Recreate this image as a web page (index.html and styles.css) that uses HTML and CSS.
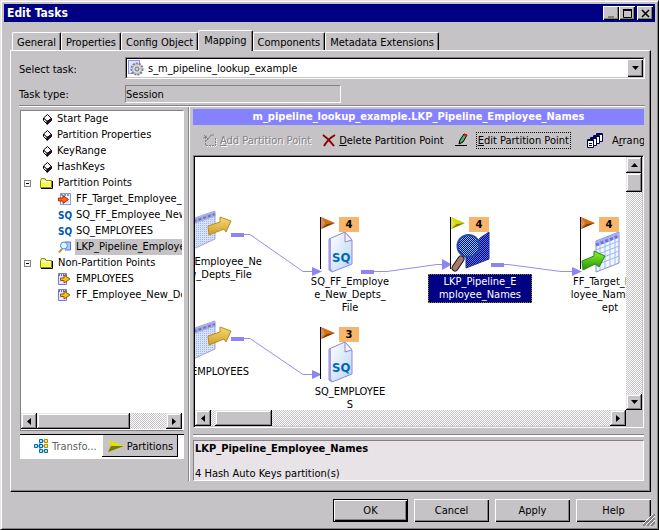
FILE: index.html
```html
<!DOCTYPE html>
<html lang="en">
<head>
  <meta charset="UTF-8">
  <title>Edit Tasks</title>
  <link rel="stylesheet" href="styles.css">
</head>
<body>

<!-- shared icons -->
<svg class="sprites" aria-hidden="true">
  <defs>
    <pattern id="dither" width="2" height="2" patternUnits="userSpaceOnUse">
      <rect width="1" height="1" fill="#000080"/>
      <rect x="1" y="1" width="1" height="1" fill="#000080"/>
    </pattern>
    <pattern id="mesh" width="2" height="2" patternUnits="userSpaceOnUse">
      <rect width="2" height="2" fill="#d6e3f7"/>
      <rect width="1" height="1" fill="#a5b3df"/>
    </pattern>
    <linearGradient id="paper" x1="0" y1="0" x2="1" y2="1">
      <stop offset="0" stop-color="#ffffff"/>
      <stop offset="1" stop-color="#b8d6f7"/>
    </linearGradient>
    <linearGradient id="gold" x1="0" y1="0" x2="0" y2="1">
      <stop offset="0" stop-color="#f7db6b"/>
      <stop offset="1" stop-color="#cf9d31"/>
    </linearGradient>
    <linearGradient id="green" x1="0" y1="0" x2="0" y2="1">
      <stop offset="0" stop-color="#94f031"/>
      <stop offset="1" stop-color="#21940a"/>
    </linearGradient>
  </defs>

  <symbol id="diamond" viewBox="0 0 9 11">
    <path d="M4.5 .5L8.5 4.5L4 7.5L.5 4Z" fill="#fff" stroke="#000"/>
    <path d="M.5 4V6.500L4 10V7.500Z" fill="#fff" stroke="#000"/>
    <path d="M4 7.500L8.500 4.500V6.500L4 10.500Z" fill="#3a1042" stroke="#000"/>
  </symbol>
  <symbol id="folder" viewBox="0 0 13 11">
    <path d="M.5 9.500V2.500L1.500 .5H5L6 2.500H11.500V9.500Z" fill="#f7f75a" stroke="#8c8c18"/>
    <path d="M1 10.500H12.500V3" fill="none" stroke="#000"/>
    <path d="M1.500 3.500H10" stroke="#fff"/>
  </symbol>
  <symbol id="target" viewBox="0 0 13 12">
    <rect x="2.500" y=".5" width="10" height="11" fill="#f7f7ff" stroke="#849ae7"/>
    <path d="M3 2H12" stroke="#8494de" stroke-width="2" stroke-dasharray="2 1"/>
    <path d="M5.500 9H11M8 7H11" stroke="#bdc7ef"/>
    <path d="M.5 5H5V2.500L10.500 6.500L5 10.500V8H.5Z" fill="#ff6b10" stroke="#b52800"/>
  </symbol>
  <symbol id="source" viewBox="0 0 13 12">
    <path d="M.5 .5H8.500V11.500H.5Z" fill="#e7e7ff" stroke="#737bd6"/>
    <path d="M1 2H9" stroke="#636bce" stroke-width="2" stroke-dasharray="1 1"/>
    <path d="M2.500 5H6V2L12 6L6 10V7.500H2.500Z" fill="#ffbd18" stroke="#8c5a00"/>
  </symbol>
  <symbol id="lens" viewBox="0 0 13 12">
    <path d="M7 1H12.500V9H7" fill="#b5c7f7" stroke="#5a73ce"/>
    <path d="M4 8L1 11.500" stroke="#bd9a10" stroke-width="2"/>
    <circle cx="6" cy="4.500" r="3.500" fill="#d6f7ff" stroke="#4a8cd6"/>
  </symbol>
  <symbol id="gear" viewBox="0 0 16 16">
    <rect x=".5" y=".5" width="11" height="13" fill="#dee3ff" stroke="#8494e7"/>
    <circle cx="9" cy="9" r="5.500" fill="#dedede" stroke="#7b7b84" stroke-width="2" stroke-dasharray="2 1"/>
    <circle cx="9" cy="9" r="4.500" fill="#dedede" stroke="#b5b5bd"/>
    <circle cx="9" cy="9" r="2" fill="#b5d7ff" stroke="#73737b"/>
  </symbol>
  <symbol id="left" viewBox="0 0 4 7"><path d="M4 0V7L0 3.500Z"/></symbol>
  <symbol id="right" viewBox="0 0 4 7"><path d="M0 0V7L4 3.500Z"/></symbol>
  <symbol id="up" viewBox="0 0 7 4"><path d="M0 4H7L3.500 0Z"/></symbol>
  <symbol id="down" viewBox="0 0 7 4"><path d="M0 0H7L3.500 4Z"/></symbol>

  <!-- node artwork, 104 x 57 -->
  <symbol id="flag" viewBox="0 0 104 57">
    <path d="M22.500 0V52" stroke="#000"/>
    <path d="M23 0L37 6L23 12Z" fill="currentColor"/>
    <path d="M23 12L37 6L29 7Z" fill="#000" opacity=".45"/>
    <path d="M23 0L27 6L23 12Z" fill="#fff" opacity=".25"/>
  </symbol>
  <symbol id="sqdoc" viewBox="0 0 104 57">
    <path d="M31 22L47 15L54 23V47L34 55L31 53Z" fill="url(#paper)" stroke="#8c86de"/>
    <path d="M32 22V53L34 54" fill="none" stroke="#a59ee7" stroke-width="2"/>
    <path d="M47 15V25L54 23Z" fill="#eff3ff" stroke="#8c86de"/>
  </symbol>
  <symbol id="srcbig" viewBox="0 0 104 57">
    <path d="M21 23L47 14V42L21 54Z" fill="url(#mesh)" stroke="#9ca6de"/>
    <path d="M21 26L47 17" stroke="#a5aae7" stroke-width="5"/>
    <path d="M21 26L47 17" stroke="#6b73bd" stroke-width="2" stroke-dasharray="3 2"/>
    <path d="M40 29L52 25V20L63 24L58 35L56 32L41 38Z" fill="url(#gold)" stroke="#b58a31"/>
  </symbol>
  <symbol id="lkpbig" viewBox="0 0 104 57">
    <path d="M38 35L52 21L61 15V42L38 51Z" fill="#5a75de"/>
    <path d="M38 35L52 21L61 15V42L38 51Z" fill="url(#dither)" stroke="#2135a5"/>
    <path d="M33 42L27 51" stroke="#211818" stroke-width="7" stroke-linecap="round"/>
    <path d="M33 42L27 51" stroke="#a57b6b" stroke-width="5" stroke-linecap="round" stroke-dasharray="1 1"/>
    <circle cx="40.500" cy="29" r="11" fill="#84c7f7"/>
    <circle cx="40.500" cy="29" r="11" fill="url(#dither)" stroke="#2149a5" stroke-width="2"/>
  </symbol>
  <symbol id="tgtbig" viewBox="0 0 104 57">
    <path d="M38 24L61 15V46L38 55Z" fill="#eff7ff" stroke="#848edb"/>
    <path d="M38 27L61 18" stroke="#a5aef7" stroke-width="5"/>
    <path d="M38 28L61 19" stroke="#6b75d6" stroke-width="3" stroke-dasharray="3 2"/>
    <path d="M38 33L61 24M38 38L61 29M38 43L61 34M38 48L61 39M42 28V53M47 26V51M52 24V49M57 22V48" stroke="#a5b6ef"/>
    <path d="M24 44L36 39V34L47 39L41 50L37 47L25 53Z" fill="url(#green)" stroke="#218c10"/>
  </symbol>
</svg>

<div class="window">
  <header class="titlebar">
    <h1>Edit Tasks</h1>
    <button class="winbtn" aria-label="Minimize" disabled><svg width="9" height="9"><path d="M1 8H7" stroke="#848284" stroke-width="2"/></svg></button>
    <button class="winbtn" aria-label="Maximize"><svg width="9" height="9"><path d="M.5 1V8.500H8.500V1" fill="none" stroke="#000"/><path d="M0 1H9" stroke="#000" stroke-width="2"/></svg></button>
    <button class="winbtn close" aria-label="Close"><svg width="9" height="9"><path d="M1 1L8 8M8 1L1 8" stroke="#000" stroke-width="1.500"/></svg></button>
  </header>

  <nav class="tabs">
    <button>General</button>
    <button>Properties</button>
    <button>Config Object</button>
    <button class="active">Mapping</button>
    <button>Components</button>
    <button>Metadata Extensions</button>
  </nav>

  <main class="page">
    <div class="field">
      <label for="task">Select task:</label>
      <div class="combo">
        <select id="task"><option>s_m_pipeline_lookup_example</option></select>
        <svg class="combo-icon" width="16" height="16"><use href="#gear"/></svg>
        <span class="combo-arrow"><svg width="7" height="4"><use href="#down"/></svg></span>
      </div>
    </div>
    <div class="field type">
      <label for="type">Task type:</label>
      <input id="type" type="text" value="Session" readonly>
    </div>

    <div class="split">
      <section class="side">
        <div class="tree">
          <ul>
            <li class="leaf"><svg width="9" height="11"><use href="#diamond"/></svg><span>Start Page</span></li>
            <li class="leaf"><svg width="9" height="11"><use href="#diamond"/></svg><span>Partition Properties</span></li>
            <li class="leaf"><svg width="9" height="11"><use href="#diamond"/></svg><span>KeyRange</span></li>
            <li class="leaf"><svg width="9" height="11"><use href="#diamond"/></svg><span>HashKeys</span></li>
            <li><i class="toggle"></i><svg width="13" height="11"><use href="#folder"/></svg><span>Partition Points</span></li>
            <li class="sub"><svg width="13" height="12"><use href="#target"/></svg><span>FF_Target_Employee_Names_Dept</span></li>
            <li class="sub"><b class="sq">SQ</b><span>SQ_FF_Employee_New_Depts_File</span></li>
            <li class="sub"><b class="sq">SQ</b><span>SQ_EMPLOYEES</span></li>
            <li class="sub selected"><svg width="13" height="12"><use href="#lens"/></svg><span>LKP_Pipeline_Employee_Names</span></li>
            <li><i class="toggle"></i><svg width="13" height="11"><use href="#folder"/></svg><span>Non-Partition Points</span></li>
            <li class="sub"><svg width="13" height="12"><use href="#source"/></svg><span>EMPLOYEES</span></li>
            <li class="sub"><svg width="13" height="12"><use href="#source"/></svg><span>FF_Employee_New_Depts_File</span></li>
          </ul>
          <div class="scroll">
            <button aria-label="Scroll left"><svg width="4" height="7"><use href="#left"/></svg></button>
            <div class="track"><div class="thumb wide"></div></div>
            <button aria-label="Scroll right"><svg width="4" height="7"><use href="#right"/></svg></button>
          </div>
        </div>
        <div class="side-tabs">
          <button>
            <svg width="15" height="14" fill="none"><path d="M3 7H12M5 7L7 2H11M5 7L7 12H11" stroke="#2171ad"/><g fill="#a5e3ff" stroke="#0069b5"><path d="M.5 5.500H3.500V8.500H.5ZM5.500 5.500H8.500V8.500H5.500ZM5.500 .5H8.500V3.500H5.500ZM5.500 10.500H8.500V13.500H5.500ZM10.500 10.500H13.500V13.500H10.500Z"/></g><path d="M10.500 .5H13.500V3.500H10.500ZM10.500 5.500H13.500V8.500H10.500Z" fill="#ffe773" stroke="#b58a00"/></svg>
            Transfo...
          </button>
          <button class="active">
            <svg width="16" height="12"><path d="M0 0L16 6L0 12L3 6Z" fill="#dee300"/><path d="M0 12L16 6H3Z" fill="#737b00"/></svg>
            Partitions
          </button>
        </div>
      </section>

      <section class="work">
        <h2>m_pipeline_lookup_example.LKP_Pipeline_Employee_Names</h2>
        <div class="toolbar">
          <button disabled><svg width="14" height="13" fill="none" stroke="#848284"><path d="M2.500 3V11.500H12.500V4" stroke-dasharray="2 1"/><path d="M0 4L4 2M1 1L5 5M6 4L8 1H11M3 7L6 4" /><path d="M4 12.500H13.500V5" stroke="#fff" stroke-dasharray="1 1"/></svg><span><u>A</u>dd Partition Point</span></button>
          <button><svg width="14" height="13"><path d="M1 1Q7 5 12 12M13 1Q6 5 2 12" fill="none" stroke="#8c0000" stroke-width="2"/></svg><span><u>D</u>elete Partition Point</span></button>
          <button class="edit"><svg width="14" height="14"><path d="M0 12.500H12" stroke="#000"/><path d="M4 11L5 7L9 1L12 2L8 9Z" fill="#4ab56b" stroke="#000"/><path d="M9 1.500L12 3" stroke="#c62121" stroke-width="2"/></svg><span class="focus"><u>E</u>dit Partition Point</span></button>
          <button class="arrange"><svg width="17" height="15" fill="#fff" stroke="#000052"><path d="M9.500 .5H15.500V8.500H9.500Z"/><path d="M6.500 2.500H12.500V10.500H6.500Z"/><path d="M3.500 4.500H9.500V12.500H3.500Z"/><path d="M.5 6.500H6.500V14.500H.5Z"/><path d="M1 7.500H6M4 5.500H9M7 3.500H12M10 1.500H15M2 10.500H5M2 12.500H5"/></svg><span>A<u>r</u>range</span></button>
        </div>

        <div class="viewer">
          <div class="canvas">
            <svg class="wires" width="430" height="254">
              <g fill="none" stroke="#948eef">
                <path d="M49 77.500H55L108 114.500H118"/>
                <path d="M179 114.500H192L242 107.500H248"/>
                <path d="M309 107.500H313L366 114.500H378"/>
                <path d="M49 181.500H55L108 217.500H118"/>
              </g>
              <g fill="#8c86ef">
                <path d="M36 76H49V80H36ZM166 113H179V117H166ZM296 106H309V110H296ZM36 180H49V184H36Z"/>
                <path d="M117 110L127 114.500L117 119ZM247 102L257 107.500L247 113ZM377 110L387 114.500L377 119ZM117 213L127 217.500L117 222Z"/>
              </g>
            </svg>
            <div class="node src1">
              <svg width="104" height="57"><use href="#srcbig"/></svg>
              <p>FF_Employee_Ne<br>w_Depts_File</p>
            </div>
            <div class="node src2">
              <svg width="104" height="57"><use href="#srcbig"/></svg>
              <p>EMPLOYEES</p>
            </div>
            <div class="node sq1">
              <svg width="104" height="57"><use href="#sqdoc"/><text x="34" y="45" class="sqmark">SQ</text><use href="#flag"/></svg>
              <span class="badge">4</span>
              <p>SQ_FF_Employe<br>e_New_Depts_<br>File</p>
            </div>
            <div class="node sq2">
              <svg width="104" height="57"><use href="#sqdoc"/><text x="34" y="45" class="sqmark">SQ</text><use href="#flag"/></svg>
              <span class="badge">3</span>
              <p>SQ_EMPLOYEE<br>S</p>
            </div>
            <div class="node lkp">
              <svg width="104" height="57"><use href="#lkpbig"/><use href="#flag"/></svg>
              <span class="badge">4</span>
              <p>LKP_Pipeline_E<br>mployee_Names</p>
            </div>
            <div class="node tgt">
              <svg width="104" height="57"><use href="#tgtbig"/><use href="#flag"/></svg>
              <span class="badge">4</span>
              <p>FF_Target_Emp<br>loyee_Names_D<br>ept</p>
            </div>
          </div>
          <div class="scroll vertical">
            <button aria-label="Scroll up"><svg width="7" height="4"><use href="#up"/></svg></button>
            <div class="track"><div class="thumb"></div></div>
            <button aria-label="Scroll down"><svg width="7" height="4"><use href="#down"/></svg></button>
          </div>
          <div class="scroll">
            <button aria-label="Scroll left"><svg width="4" height="7"><use href="#left"/></svg></button>
            <div class="track inset"><div class="thumb"></div></div>
            <button aria-label="Scroll right"><svg width="4" height="7"><use href="#right"/></svg></button>
          </div>
        </div>

        <div class="info">
          <h3>LKP_Pipeline_Employee_Names</h3>
          <p>4 Hash Auto Keys partition(s)</p>
        </div>
      </section>
    </div>
  </main>

  <footer class="actions">
    <button class="default">OK</button>
    <button>Cancel</button>
    <button>Apply</button>
    <button>Help</button>
    <svg class="grip" width="12" height="12"><path d="M0 12L12 0M4 12L12 4M8 12L12 8" stroke="#848284" stroke-width="2"/><path d="M-1 11L11 -1M3 11L12 2M7 11L12 6" stroke="#fff"/></svg>
  </footer>
</div>

</body>
</html>
```
FILE: styles.css
```css
* {
  box-sizing: border-box;
}

body {
  margin: 0;
  background: #c6c3c6;
  color: #000;
  font-family: "DejaVu Sans Condensed", Tahoma, "Noto Sans", sans-serif;
  font-size: 11px;
  line-height: 13px;
}

h1, h2, h3, p, ul {
  margin: 0;
  padding: 0;
}

button, input, select {
  font: inherit;
  color: inherit;
  margin: 0;
  padding: 0;
  border: 0;
  border-radius: 0;
  background: #c6c3c6;
  white-space: nowrap;
}

svg {
  display: block;
  flex: none;
}

.sprites {
  position: absolute;
  width: 0;
  height: 0;
}

.window {
  display: flex;
  flex-direction: column;
  min-height: 100vh;
  padding: 3px;
  border: 1px solid;
  border-color: #e7e3e7 #000 #000 #e7e3e7;
  box-shadow: inset 1px 1px #fff, inset -1px -1px #848284;
}

/* title bar */
.titlebar {
  display: flex;
  align-items: center;
  height: 18px;
  padding: 0 2px 0 3px;
  background: #000084;
  color: #fff;
}

.titlebar h1 {
  flex: 1;
  font-size: 12px;
}

.winbtn {
  display: flex;
  align-items: center;
  justify-content: center;
  width: 16px;
  height: 14px;
  box-shadow: inset 1px 1px #fff, inset -1px -1px #000, inset -2px -2px #848284;
}

.winbtn.close {
  margin-left: 2px;
}

/* property tabs */
.tabs {
  display: flex;
  align-items: flex-end;
  height: 28px;
  padding-left: 8px;
}

.tabs button {
  height: 18px;
  padding: 1px 4px 0;
  border: 1px solid;
  border-color: #fff #000 transparent #fff;
  border-bottom: 0;
  border-radius: 2px 2px 0 0;
  box-shadow: inset -1px 0 #848284;
}

.tabs .active {
  height: 21px;
  margin-bottom: -1px;
  padding: 0 5px 2px;
  z-index: 1;
}

.page {
  display: flex;
  flex: 1;
  flex-direction: column;
  margin: 0 4px 0 6px;
  padding: 6px 5px 10px 8px;
  border: 1px solid;
  border-color: #fff #000 #000 #fff;
  box-shadow: inset -1px -1px #848284;
}

.field {
  display: flex;
  align-items: center;
}

.field label {
  width: 106px;
  padding-top: 2px;
}

.combo {
  position: relative;
  flex: 1;
  border: 1px solid;
  border-color: #848284 #fff #fff #848284;
}

.combo select {
  display: block;
  width: 100%;
  height: 20px;
  padding-left: 21px;
  border: 1px solid;
  border-color: #000 #c6c3c6 #c6c3c6 #000;
  background: #fff;
  appearance: none;
}

.combo-icon {
  position: absolute;
  left: 2px;
  top: 2px;
}

.combo-arrow {
  position: absolute;
  top: 1px;
  right: 1px;
  display: flex;
  align-items: center;
  justify-content: center;
  width: 16px;
  height: 18px;
  background: #c6c3c6;
  box-shadow: inset 1px 1px #fff, inset -1px -1px #000, inset -2px -2px #848284;
  pointer-events: none;
}

.type {
  margin-top: 6px;
}

.type label {
  padding: 0;
}

.type input {
  width: 216px;
  height: 18px;
  border: 1px solid;
  border-color: #848284 #fff #fff #848284;
}

.split {
  display: flex;
  flex: 1;
  margin-top: 2px;
  border-top: 1px solid #848284;
  box-shadow: inset 0 1px #fff;
}

/* tree */
.side {
  display: flex;
  flex: none;
  flex-direction: column;
  width: 165px;
  padding: 4px 0 22px 1px;
}

.tree {
  display: flex;
  flex: 1;
  flex-direction: column;
  padding: 0 1px 1px 0;
  border: 1px solid;
  border-color: #848284 #fff #848284 #848284;
  background: #fff;
}

.tree ul {
  flex: 1;
  overflow: hidden;
  list-style: none;
}

.tree li {
  display: flex;
  align-items: center;
  height: 16px;
  padding-left: 3px;
  white-space: nowrap;
}

.tree li svg {
  margin-right: 4px;
}

.tree .leaf {
  padding-left: 22px;
}

.tree .leaf svg {
  margin-right: 4px;
}

.tree .sub {
  padding-left: 37px;
}

.tree li span {
  padding: 1px 0 2px 1px;
}

.selected span {
  background: #c6c3c6;
}

.sq {
  flex: none;
  width: 17px;
  color: #005aad;
  font-size: 10px;
}

.toggle {
  width: 7px;
  height: 7px;
  margin-right: 9px;
  border: 1px solid #848284;
  background: linear-gradient(#000, #000) center / 3px 1px no-repeat;
}

.side-tabs {
  display: flex;
  height: 25px;
  margin-top: 3px;
  padding: 0 6px 2px 0;
  border-top: 1px solid #000;
  background: #fff;
}

.side-tabs button {
  display: flex;
  flex: 1 0 auto;
  align-items: center;
  gap: 3px;
  padding: 0 4px 0 14px;
  background: #fff;
  color: #636163;
}

.side-tabs .active {
  padding: 0 4px 0 6px;
  background: #c6c3c6;
  color: #000;
  box-shadow: inset -1px -1px #000, inset 1px 0 #fff;
}

/* scrollbars */
.scroll {
  display: flex;
  height: 16px;
}

.scroll button {
  display: flex;
  flex: none;
  align-items: center;
  justify-content: center;
  width: 16px;
  height: 16px;
}

.scroll button, .thumb {
  background: #c6c3c6;
  box-shadow: inset -1px -1px #000, inset 1px 1px #e7e3e7, inset -2px -2px #848284, inset 2px 2px #fff;
}

.track {
  flex: 1;
  background: repeating-conic-gradient(#fff 0 25%, #c6c3c6 0 50%) 0 0 / 2px 2px;
}

.thumb {
  width: 57px;
  height: 16px;
}

.thumb.wide {
  width: 72%;
}

.inset {
  padding-left: 4px;
}

.vertical {
  flex-direction: column;
  width: 16px;
  height: auto;
}

.vertical .thumb {
  width: 16px;
  height: 19px;
}

/* work area */
.work {
  display: flex;
  flex: 1;
  flex-direction: column;
  min-width: 0;
  margin: 1px 0 0 4px;
  padding: 2px 1px 0 4px;
  border-left: 1px solid #848284;
  box-shadow: inset 1px 0 #fff;
}

.work h2 {
  height: 16px;
  background: #8482ff;
  color: #fff;
  font-size: 11px;
  line-height: 15px;
  text-align: center;
  white-space: nowrap;
  overflow: hidden;
}

.toolbar {
  display: flex;
  align-items: center;
  gap: 11px;
  height: 30px;
  padding-left: 10px;
  overflow: hidden;
}

.toolbar button {
  display: flex;
  flex: none;
  align-items: center;
  gap: 3px;
}

.toolbar button:disabled {
  color: #848284;
  text-shadow: 1px 1px #fff;
}

.toolbar .edit, .toolbar .arrange {
  gap: 8px;
}

.toolbar .arrange {
  margin-left: 6px;
}

.focus {
  padding: 1px;
  outline: 1px dotted #000;
}

.viewer {
  display: grid;
  flex: 1;
  grid-template-columns: minmax(0, 1fr) 16px;
  grid-template-rows: minmax(0, 1fr) 16px;
  border: 1px solid;
  border-color: #848284 #fff #fff #848284;
  box-shadow: inset 1px 1px #000;
  padding: 1px;
}

.canvas {
  position: relative;
  min-height: 240px;
  background: #fff;
  overflow: hidden;
}

.wires {
  position: absolute;
  left: 0;
  top: 0;
}

.node {
  position: absolute;
  width: 104px;
  text-align: center;
}

.node p {
  padding: 1px 0 2px;
  white-space: nowrap;
}

.src1 { left: -27px; top: 40px; }
.src2 { left: -27px; top: 150px; }
.sq1 { left: 103px; top: 60px; }
.sq2 { left: 103px; top: 170px; }
.lkp { left: 233px; top: 60px; }
.tgt { left: 363px; top: 60px; }

.node svg {
  color: #d66d10;
}

.lkp svg {
  color: #d6db08;
}

.lkp p {
  background: #000084;
  color: #fff;
  outline: 1px dotted #848200;
  outline-offset: -1px;
}

.badge {
  position: absolute;
  left: 41px;
  top: 0;
  width: 20px;
  height: 15px;
  background: #f7b66b;
  font-weight: bold;
  line-height: 15px;
}

.sqmark {
  fill: #0069b5;
  font-size: 13px;
  font-weight: bold;
}

.info {
  position: relative;
  height: 41px;
  margin-top: 12px;
  padding: 1px;
  border: 1px solid;
  border-color: #848284 #fff #fff #848284;
  background: #e7e3e7;
}

/* groove between the viewer and the description */
.info::before {
  content: "";
  position: absolute;
  left: -1px;
  right: -1px;
  top: -7px;
  height: 2px;
  border-top: 1px solid #848284;
  background: #fff;
}

.info h3 {
  margin-bottom: 12px;
  font-size: 11px;
}

/* dialog buttons */
.actions {
  position: relative;
  display: flex;
  justify-content: flex-end;
  gap: 6px;
  padding: 7px 4px 4px;
}

.actions button {
  width: 75px;
  height: 23px;
  box-shadow: inset 1px 1px #fff, inset -1px -1px #000, inset -2px -2px #848284;
}

.actions .default {
  border: 1px solid #000;
}

.grip {
  position: absolute;
  right: 0;
  bottom: 0;
}
```
